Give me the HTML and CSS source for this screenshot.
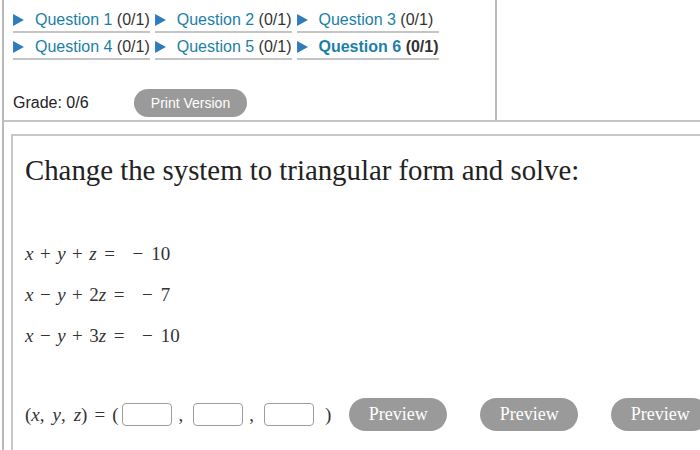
FILE: index.html
```html
<!DOCTYPE html>
<html lang="en">
<head>
  <meta charset="UTF-8" />
  <title>Question 6</title>
  <link rel="stylesheet" href="styles.css">
</head>
<body>
  <div class="page">
    <!-- question list + grade -->
    <div class="nav">
      <ul class="qlist">
        <li><a class="qitem" href="#"><svg class="tri" viewBox="0 0 10 11"><polygon points="0,0 10,5.5 0,11"/></svg><span class="qname">Question 1</span>&nbsp;<span class="score">(0/1)</span></a></li>
        <li><a class="qitem" href="#"><svg class="tri" viewBox="0 0 10 11"><polygon points="0,0 10,5.5 0,11"/></svg><span class="qname">Question 2</span>&nbsp;<span class="score">(0/1)</span></a></li>
        <li><a class="qitem" href="#"><svg class="tri" viewBox="0 0 10 11"><polygon points="0,0 10,5.5 0,11"/></svg><span class="qname">Question 3</span>&nbsp;<span class="score">(0/1)</span></a></li>
        <li><a class="qitem" href="#"><svg class="tri" viewBox="0 0 10 11"><polygon points="0,0 10,5.5 0,11"/></svg><span class="qname">Question 4</span>&nbsp;<span class="score">(0/1)</span></a></li>
        <li><a class="qitem" href="#"><svg class="tri" viewBox="0 0 10 11"><polygon points="0,0 10,5.5 0,11"/></svg><span class="qname">Question 5</span>&nbsp;<span class="score">(0/1)</span></a></li>
        <li><a class="qitem current" href="#"><svg class="tri" viewBox="0 0 10 11"><polygon points="0,0 10,5.5 0,11"/></svg><span class="qname">Question 6</span>&nbsp;<span class="score">(0/1)</span></a></li>
      </ul>
      <div class="grade-row">
        <span class="grade">Grade: 0/6</span>
        <button class="pill print-btn">Print Version</button>
      </div>
    </div>

    <div class="content">
      <div class="question">
        <p class="prompt">Change the system to triangular form and solve:</p>

        <div class="system">
          <p class="eq"><i>x</i><span class="op">+</span><i>y</i><span class="op">+</span><i>z</i><span class="rel">=</span><span class="neg">&minus;</span>10</p>
          <p class="eq"><i>x</i><span class="op">&minus;</span><i>y</i><span class="op">+</span>2<i>z</i><span class="rel">=</span><span class="neg">&minus;</span>7</p>
          <p class="eq"><i>x</i><span class="op">&minus;</span><i>y</i><span class="op">+</span>3<i>z</i><span class="rel">=</span><span class="neg">&minus;</span>10</p>
        </div>

        <div class="answer">
          <span class="math">(<i>x</i><span class="sep">,</span><i>y</i><span class="sep">,</span><i>z</i>)<span class="rel">=</span>(</span>
          <input class="blank" type="text">
          <span class="math comma">,</span>
          <input class="blank" type="text">
          <span class="math comma">,</span>
          <input class="blank" type="text">
          <span class="math close">)</span>
          <button class="pill preview">Preview</button>
          <button class="pill preview">Preview</button>
          <button class="pill preview">Preview</button>
        </div>
      </div>
    </div>
  </div>
</body>
</html>
```

FILE: styles.css
```css
* {
  margin: 0;
  padding: 0;
  box-sizing: border-box;
}

body {
  background: #fff;
  color: #222;
  font-family: "Liberation Sans", Arial, sans-serif;
  overflow: hidden;
}

.page {
  margin-left: 2px;
  border-left: 2px solid #b9b9b9;
  min-height: 450px;
}

.nav {
  width: 493px;
  height: 120px;
  border-right: 2px solid #b9b9b9;
  padding: 10px 0 0 9px;
}

.qlist {
  list-style: none;
  display: grid;
  grid-template-columns: repeat(3, max-content);
  column-gap: 5px;
  row-gap: 4px;
}

.qitem {
  display: flex;
  align-items: center;
  height: 23px;
  font-size: 16px;
  text-decoration: none;
  border-bottom: 2px solid #c4c4c4;
  padding-bottom: 1px;
}

.tri {
  width: 11px;
  height: 12px;
  fill: #2f7cbc;
  margin-right: 11px;
}

.qname {
  color: #1c7fa6;
}

.score {
  color: #333;
}

.current .qname,
.current .score {
  font-weight: bold;
}

.grade-row {
  display: flex;
  align-items: center;
  margin-top: 29px;
}

.grade {
  font-size: 16px;
  color: #222;
  width: 121px;
}

.pill {
  border: none;
  background: #9a9a9a;
  color: #fff;
  border-radius: 999px;
}

.print-btn {
  font-family: "Liberation Sans", Arial, sans-serif;
  font-size: 14px;
  width: 113px;
  height: 28px;
}

.content {
  border-top: 2px solid #c4c4c4;
  padding: 12px 0 0 7px;
}

.question {
  border: 2px solid #c8c8c8;
  border-right: none;
  height: 330px;
  padding: 18px 0 0 12px;
  font-family: "Liberation Serif", "Times New Roman", serif;
  color: #333;
  overflow: hidden;
}

.prompt {
  font-size: 28.8px;
  line-height: 32px;
  color: #222;
}

.system {
  margin-top: 56px;
}

.eq {
  font-size: 19px;
  line-height: 24px;
  margin-bottom: 17px;
}

.op {
  margin: 0 6.5px;
}

.rel {
  margin: 0 7.5px;
}

.neg {
  margin: 0 8px 0 10px;
}

.answer {
  display: flex;
  align-items: center;
  margin-top: 50px;
  height: 33px;
}

.math {
  font-size: 19px;
  white-space: nowrap;
  flex-shrink: 0;
}

.sep {
  margin-right: 8px;
}

.answer .rel {
  margin: 0 7px;
}

.blank {
  flex-shrink: 0;
  width: 50px;
  height: 23px;
  border: 1px solid #9d9d9d;
  border-radius: 4px;
  margin-left: 4px;
  background: #fff;
}

.comma {
  margin: 0 6px;
}

.close {
  margin-left: 11px;
}

.preview {
  font-family: "Liberation Serif", "Times New Roman", serif;
  font-size: 18px;
  width: 98px;
  height: 33px;
  flex-shrink: 0;
  margin-left: 33px;
}

.close + .preview {
  margin-left: 18px;
}
```
